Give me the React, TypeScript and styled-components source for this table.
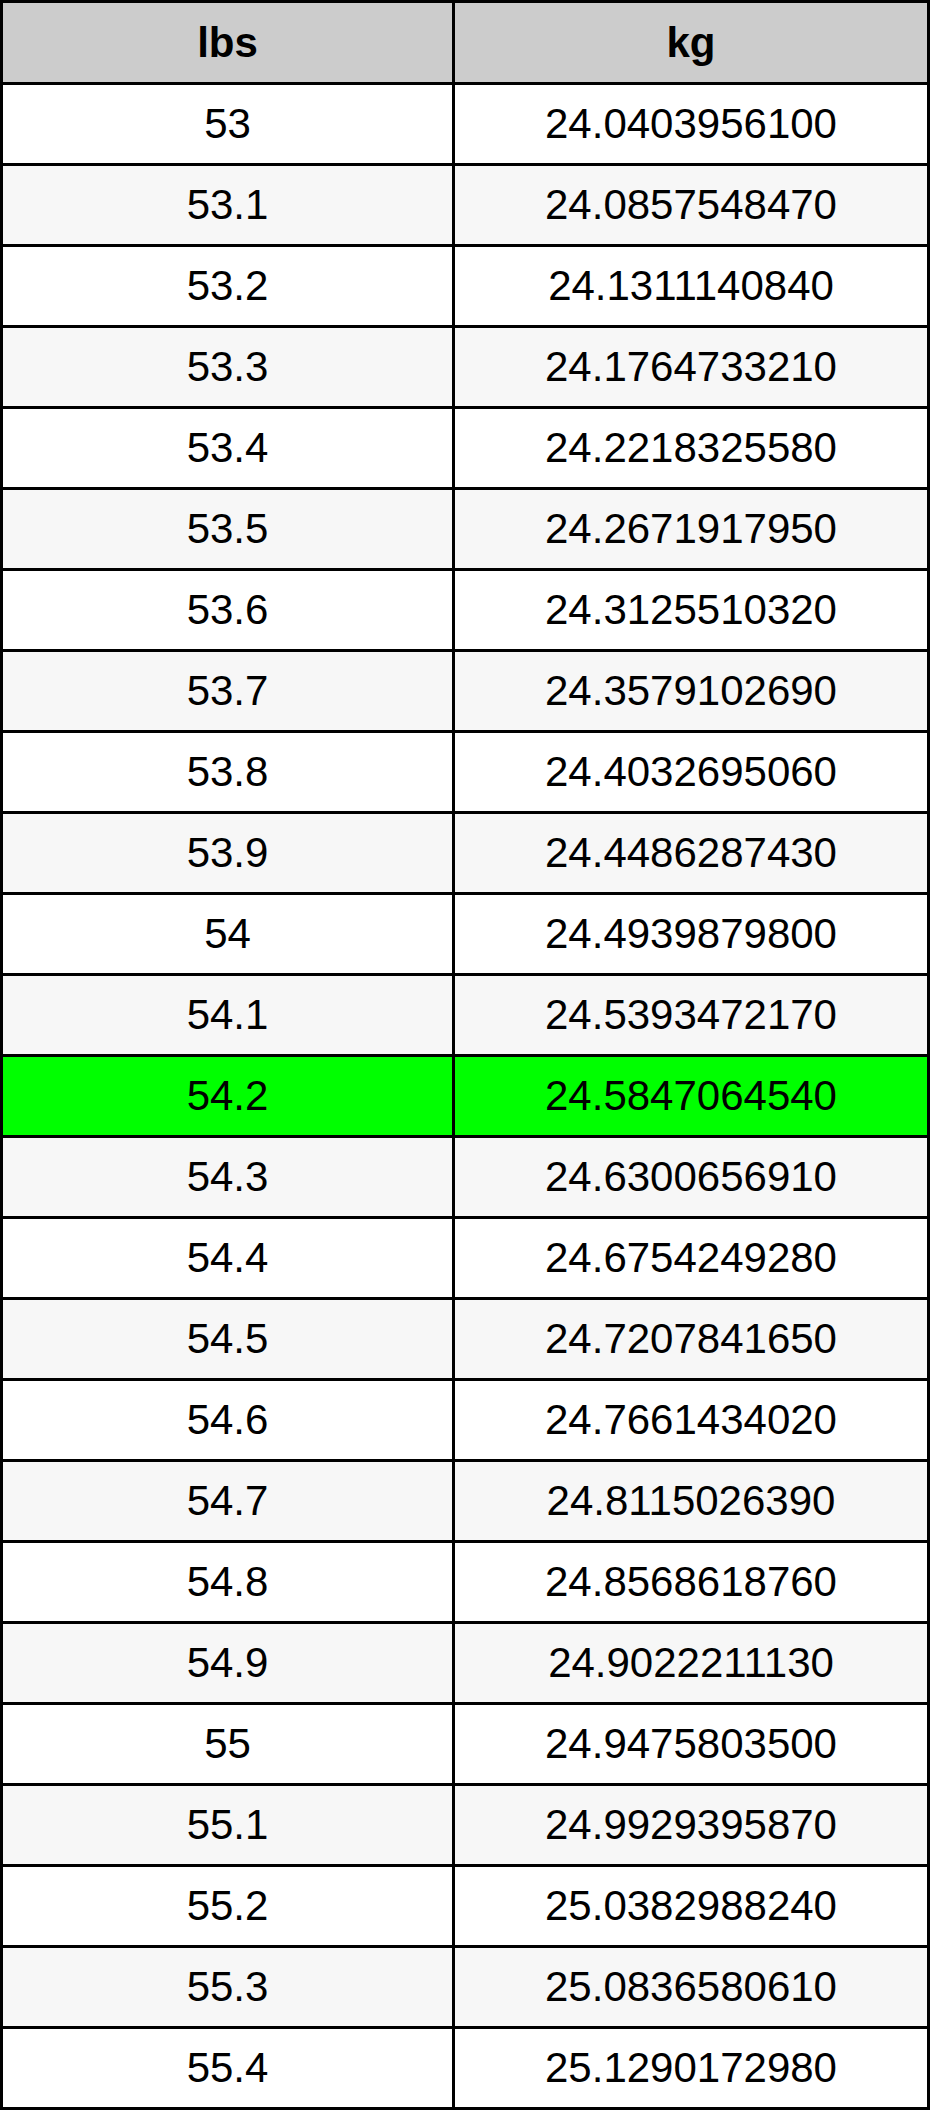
import React from 'react';
import styled, {createGlobalStyle} from 'styled-components';

const GlobalStyle = createGlobalStyle`
    html, body {
        margin: 0;
        padding: 0;
        background: #ffffff;
    }
    body {
        font-family: "Liberation Sans", Arial, sans-serif;
    }
`;

const Table = styled.table`
    width: 930px;
    border-collapse: collapse;
    table-layout: fixed;
    font-family: "Liberation Sans", Arial, sans-serif;
    font-size: 42px;
    color: #000000;
`;

const HeadCell = styled.th`
    height: 79px;
    padding: 0;
    border: 3px solid #000000;
    background: #cccccc;
    font-weight: bold;
    text-align: center;
`;

const Row = styled.tr<{$highlight?: boolean; $odd?: boolean}>`
    background: ${(p) => (p.$highlight ? '#00ff00' : p.$odd ? '#f7f7f7' : '#ffffff')};
`;

const Cell = styled.td`
    height: 78px;
    padding: 0;
    border: 3px solid #000000;
    text-align: center;
`;

// lbs in tenths, 53.0 -> 55.4
const rows = Array.from({length: 25}, (_, i) => {
    const t = 530 + i;
    const lbs = t % 10 === 0 ? String(t / 10) : (t / 10).toFixed(1);
    const v = t * 45359237; // kg * 1e9
    const whole = Math.floor(v / 1e9);
    const frac = String(v % 1e9).padStart(9, '0');
    return {lbs, kg: `${whole}.${frac}0`};
});

export default function App() {
    return (
        <>
            <GlobalStyle />
            <Table>
                <colgroup>
                    <col style={{width: '452px'}} />
                    <col />
                </colgroup>
                <thead>
                    <tr>
                        <HeadCell>lbs</HeadCell>
                        <HeadCell>kg</HeadCell>
                    </tr>
                </thead>
                <tbody>
                    {rows.map((r, i) => (
                        <Row key={r.lbs} $odd={i % 2 === 1} $highlight={r.lbs === '54.2'}>
                            <Cell>{r.lbs}</Cell>
                            <Cell>{r.kg}</Cell>
                        </Row>
                    ))}
                </tbody>
            </Table>
        </>
    );
}
